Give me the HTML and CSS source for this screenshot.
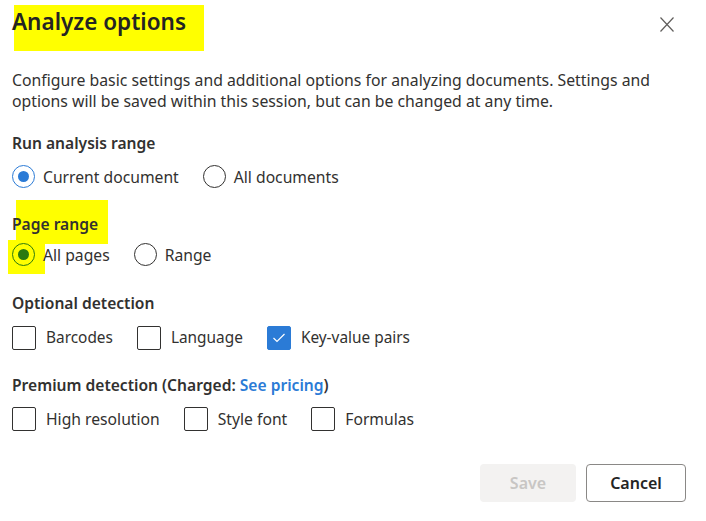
FILE: index.html
```html
<!DOCTYPE html>
<html lang="en">
<head>
<meta charset="utf-8">
<title>Analyze options</title>
<link rel="stylesheet" href="styles.css">
</head>
<body>
<div class="dialog">
  <div class="header">
    <h1 class="title"><span class="hl-title"></span><span class="title-text">Analyze options</span></h1>
    <button class="close" aria-label="Close">
      <svg width="14" height="15" viewBox="0 0 14 15"><path d="M0.5 0.5 L13.5 14.5 M13.5 0.5 L0.5 14.5" stroke="#605e5c" stroke-width="1.2" fill="none"/></svg>
    </button>
  </div>
  <p class="desc">Configure basic settings and additional options for analyzing documents. Settings and options will be saved within this session, but can be changed at any time.</p>

  <section class="sec sec1">
    <div class="label">Run analysis range</div>
    <div class="row radios">
      <label class="opt"><span class="radio checked"></span>Current document</label>
      <label class="opt"><span class="radio"></span>All documents</label>
    </div>
  </section>

  <section class="sec sec2">
    <div class="label"><span class="hl-label"></span><span class="txt">Page range</span></div>
    <div class="row radios">
      <label class="opt"><span class="hl-radio"></span><span class="radio checked green"></span><span class="txt">All pages</span></label>
      <label class="opt"><span class="radio"></span>Range</label>
    </div>
  </section>

  <section class="sec sec3">
    <div class="label">Optional detection</div>
    <div class="row checks">
      <label class="opt"><span class="box"></span>Barcodes</label>
      <label class="opt"><span class="box"></span>Language</label>
      <label class="opt"><span class="box checked"><svg width="14" height="10" viewBox="0 0 14 10"><path d="M1.5 5 L5 8.5 L12.5 1" stroke="#fff" stroke-width="1.2" fill="none"/></svg></span>Key-value pairs</label>
    </div>
  </section>

  <section class="sec sec4">
    <div class="label">Premium detection (Charged: <a class="link" href="#">See pricing</a>)</div>
    <div class="row checks">
      <label class="opt"><span class="box"></span>High resolution</label>
      <label class="opt"><span class="box"></span>Style font</label>
      <label class="opt"><span class="box"></span>Formulas</label>
    </div>
  </section>

  <div class="footer">
    <button class="btn save" disabled>Save</button>
    <button class="btn cancel">Cancel</button>
  </div>
</div>
</body>
</html>
```
FILE: styles.css
```css
* { box-sizing: border-box; }
html, body { margin: 0; padding: 0; background: #fff; }
body {
  font-family: "Noto Sans", "Open Sans", sans-serif;
  color: #323130;
  width: 706px;
  height: 521px;
  overflow: hidden;
}
.dialog { padding: 0 20px 0 12px; }
.header {
  display: flex;
  justify-content: space-between;
  align-items: flex-start;
  padding-right: 12px;
}
.title {
  position: relative;
  margin: 5px 0 0 0;
  height: 46px;
  font-size: 22.5px;
  font-weight: 600;
  line-height: 33px;
  color: #242424;
}
.hl-title {
  position: absolute;
  left: 2px; top: 0;
  width: 190px; height: 46px;
  background: #ffff00;
}
.title-text { position: relative; }
.close {
  margin-top: 17px;
  padding: 0;
  border: 0;
  background: none;
  width: 14px;
  height: 15px;
  display: block;
}
.close svg { display: block; }
.desc {
  margin: 19px 0 0 0;
  font-size: 15.8px;
  line-height: 21px;
  max-width: 660px;
}
.sec { display: flex; flex-direction: column; }
.sec1 { margin-top: 20px; }
.sec2 { margin-top: 25px; }
.sec3 { margin-top: 26px; }
.sec4 { margin-top: 24px; }
.label {
  position: relative;
  font-size: 15.6px;
  font-weight: 600;
  line-height: 22px;
}
.label .txt { position: relative; }
.hl-label {
  position: absolute;
  left: 4px; top: -13px;
  width: 92px; height: 44px;
  background: #ffff00;
}
.sec1 .label { margin-bottom: 11px; }
.sec2 .label { margin-bottom: 8px; }
.sec3 .label { margin-bottom: 12px; }
.sec4 .label { margin-bottom: 11px; }
.link { color: #2b7bd6; text-decoration: none; }
.row { display: flex; gap: 24px; }
.opt {
  position: relative;
  display: flex;
  align-items: center;
  font-size: 15.7px;
  line-height: 22px;
}
.opt .txt { position: relative; }
.radios .opt { gap: 8px; height: 23px; }
.checks .opt { gap: 10px; height: 24px; font-size: 15.4px; }
.sec4 .checks .opt { font-size: 15.7px; }
.radio {
  position: relative;
  width: 23px; height: 23px;
  border: 1px solid #323130;
  border-radius: 50%;
  flex: none;
  display: flex;
  align-items: center;
  justify-content: center;
}
.radio.checked { border-color: #2b7bd6; }
.radio.checked::after {
  content: "";
  width: 11px; height: 11px;
  border-radius: 50%;
  background: #2b7bd6;
}
.radio.green { border-color: #2b7a10; }
.radio.green::after { background: #2b7a10; }
.hl-radio {
  position: absolute;
  left: -4px; top: -3px;
  width: 37px; height: 34px;
  background: #ffff00;
}
.box {
  width: 24px; height: 24px;
  border: 1px solid #323130;
  border-radius: 2px;
  flex: none;
  display: flex;
  align-items: center;
  justify-content: center;
}
.box.checked { background: #2b7bd6; border-color: #2b7bd6; }
.box svg { display: block; }
.footer {
  display: flex;
  justify-content: flex-end;
  gap: 10px;
  margin-top: 33px;
}
.btn {
  height: 38px;
  font-family: inherit;
  font-size: 16px;
  font-weight: 600;
  border-radius: 4px;
  padding: 0;
}
.save {
  width: 96px;
  background: #f3f2f1;
  border: 0;
  color: #c8c6c4;
}
.cancel {
  width: 100px;
  background: #fff;
  border: 1px solid #8a8886;
  color: #242424;
}
```
